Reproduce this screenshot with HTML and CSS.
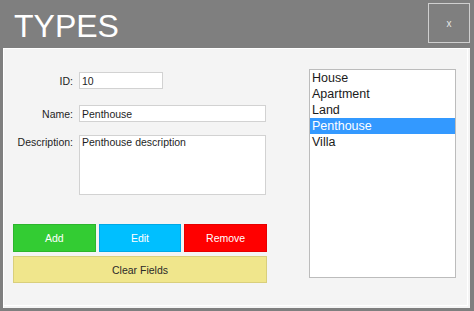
FILE: index.html
```html
<!DOCTYPE html>
<html>
  <head>
    <link rel="stylesheet" href="styles.css">
  </head>
  <body>
    <div class="window">
      <header class="title-bar">
        <h1 class="title">TYPES</h1>
        <button class="close-btn">x</button>
      </header>

      <main class="panel">
        <section class="editor">
          <div class="field">
            <label for="type-id">ID:</label>
            <input type="text" id="type-id" class="input-id" value="10" />
          </div>
          <div class="field field-name">
            <label for="type-name">Name:</label>
            <input type="text" id="type-name" value="Penthouse" />
          </div>
          <div class="field field-desc">
            <label for="type-desc">Description:</label>
            <textarea id="type-desc">Penthouse description</textarea>
          </div>

          <div class="actions">
            <button class="btn btn-add">Add</button>
            <button class="btn btn-edit">Edit</button>
            <button class="btn btn-remove">Remove</button>
          </div>
          <button class="btn btn-clear">Clear Fields</button>
        </section>

        <ul class="type-list">
          <li>House</li>
          <li>Apartment</li>
          <li>Land</li>
          <li class="selected">Penthouse</li>
          <li>Villa</li>
        </ul>
      </main>
    </div>
  </body>
</html>
```

FILE: styles.css
```css
body {
  margin: 0;
  background-color: #7f7f7f;
  font-family: "Liberation Sans", Arial, sans-serif;
}

.window {
  width: 474px;
  height: 311px;
  overflow: hidden;
}

.title-bar {
  height: 48px;
  display: flex;
  justify-content: space-between;
  align-items: flex-start;
  padding-right: 4px;
  box-sizing: border-box;
}

.title {
  margin: 0;
  padding: 4px 0 0 14px;
  font-size: 32px;
  line-height: 44px;
  font-weight: normal;
  color: #ffffff;
}

.close-btn {
  margin-top: 3px;
  width: 42px;
  height: 40px;
  background: none;
  border: 1px solid #cfcfcf;
  color: #e6e6e6;
  font-family: inherit;
  font-size: 10px;
  padding: 0;
}

.panel {
  margin-left: 3px;
  width: 467px;
  height: 260px;
  box-sizing: border-box;
  background-color: #f4f4f4;
  border-top: 1px solid #ffffff;
  border-left: 1px solid #ffffff;
  box-shadow: inset -2px -2px 0 #f4f4f4, inset -3px -3px 0 #ffffff;
  display: flex;
  align-items: flex-start;
}

.editor {
  width: 263px;
  padding-top: 23px;
}

.field {
  display: grid;
  grid-template-columns: 69px 187px;
  column-gap: 6px;
  align-items: center;
  font-size: 10.5px;
  color: #1e1e1e;
}

.field label {
  text-align: right;
}

.field input,
.field textarea {
  box-sizing: border-box;
  height: 17px;
  border: 1px solid #d2d2d2;
  background-color: #ffffff;
  padding: 0 2px;
  margin: 0;
  font-family: inherit;
  font-size: 10.5px;
  line-height: 12px;
  color: #1e1e1e;
}

.field .input-id {
  width: 84px;
}

.field-name {
  margin-top: 16px;
}

.field-desc {
  margin-top: 13px;
  align-items: start;
}

.field-desc label {
  margin-top: 1px;
}

.field textarea {
  height: 60px;
  resize: none;
}

.actions {
  margin: 29px 0 0 9px;
  display: grid;
  grid-template-columns: repeat(3, 1fr);
  gap: 3px;
}

.btn {
  box-sizing: border-box;
  height: 28px;
  padding: 0;
  border: 1px solid;
  font-family: inherit;
  font-size: 10.5px;
  color: #ffffff;
}

.btn-add {
  background-color: #33cc33;
  border-color: #2db52d;
}

.btn-edit {
  background-color: #00bfff;
  border-color: #00a9e6;
}

.btn-remove {
  background-color: #ff0000;
  border-color: #e60000;
}

.btn-clear {
  margin: 4px 0 0 9px;
  width: 254px;
  height: 27px;
  background-color: #f0e68c;
  border-color: #d9cf7c;
  color: #2a2a2a;
}

.type-list {
  margin: 20px 0 0 42px;
  padding: 0;
  width: 147px;
  height: 209px;
  box-sizing: border-box;
  list-style: none;
  background-color: #ffffff;
  border: 1px solid #bcbcbc;
  font-size: 12.5px;
  line-height: 16px;
  color: #1a1a1a;
}

.type-list li {
  padding-left: 2px;
}

.type-list .selected {
  background-color: #3399ff;
  color: #ffffff;
}
```
